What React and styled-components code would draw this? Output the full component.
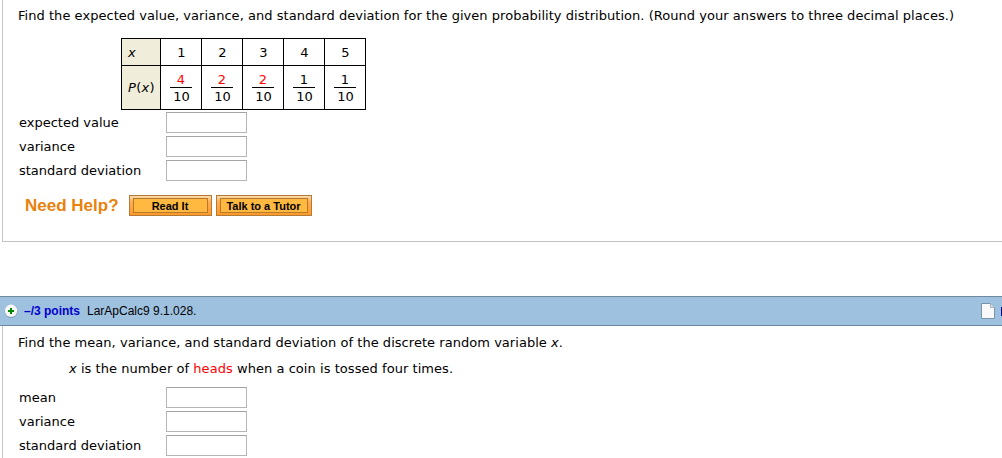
import styled, { createGlobalStyle } from "styled-components";

const GlobalStyle = createGlobalStyle`
  * {
    box-sizing: border-box;
  }
  body {
    margin: 0;
    background-color: white;
    overflow: hidden;
  }
`;
const Page = styled.div`
  width: 100%;
  height: 458px;
  overflow: hidden;
  color: black;
  font-family: Verdana, "DejaVu Sans", sans-serif;
  font-size: 13px;
  line-height: 16px;
  white-space: nowrap;
`;
const Question = styled.div`
  height: ${(props) => props.$height}px;
  margin-left: 2px;
  padding: ${(props) => props.$top}px 0 0 15px;
  border-left: 1px solid #c3c3c3;
  border-bottom: 1px solid #c3c3c3;
`;
const Text = styled.div`
  height: 16px;
  letter-spacing: ${(props) => props.$spacing || 0}px;
`;
const Indent = styled(Text)`
  margin: 10px 0 0 51px;
`;
const Red = styled.span`
  color: #ff0000;
`;
const Table = styled.table`
  width: 245px;
  height: 72px;
  margin: 14px 0 0 103px;
  border-collapse: collapse;
  table-layout: fixed;
`;
const Cell = styled.td`
  width: 41px;
  height: ${(props) => props.$height}px;
  padding: 1px 0 0 1px;
  border: 1px solid black;
  text-align: center;
`;
const HeadCell = styled(Cell)`
  width: 39px;
  padding-left: 6px;
  background-color: #f0eedb;
  letter-spacing: 0.3px;
  text-align: left;
`;
const Fraction = styled.div`
  display: flex;
  flex-direction: column;
  width: 22px;
  margin: 2px 0 0 8px;
`;
const Top = styled.span`
  height: 16px;
  color: ${(props) => (props.$red ? "#ff0000" : "black")};
  border-bottom: 1px solid black;
`;
const Bottom = styled.span`
  height: 18px;
  padding-left: 1px;
  line-height: 17px;
`;
const Answers = styled.div`
  display: grid;
  grid-template-columns: 147px 81px;
  grid-auto-rows: 21px;
  row-gap: 3px;
  margin: ${(props) => props.$top}px 0 0 1px;
`;
const Label = styled.label`
  line-height: 21px;
`;
const Input = styled.input`
  width: 81px;
  height: 21px;
  padding: 1px 4px;
  border: 1px solid #b5b5b5;
  border-top-color: #a3a3a3;
  border-radius: 0;
  outline: none;
  background-color: white;
`;
const Help = styled.div`
  display: flex;
  align-items: center;
  height: 21px;
  margin: 14px 0 0 7px;
  font-family: "Liberation Sans", Arial, sans-serif;
`;
const HelpTitle = styled.span`
  width: 104px;
  color: #e8820c;
  font-size: 17px;
  font-weight: bold;
`;
const HelpButton = styled.button`
  width: ${(props) => props.$width}px;
  height: 21px;
  margin-right: 4px;
  padding: 2px 3px;
  border: 1px solid #b37a38;
  border-radius: 0;
  background: linear-gradient(#ffdcb0, #ffad55 30%, #ff9a2b);
`;
const ButtonText = styled.span`
  display: block;
  height: 15px;
  padding-right: 1px;
  border: 1px solid #b9792a;
  background-color: #ffb940;
  color: black;
  font: bold 11px/14px "Liberation Sans", Arial, sans-serif;
  text-align: center;
`;
const Bar = styled.div`
  display: flex;
  align-items: center;
  height: 30px;
  margin-top: 54px;
  padding-left: 4px;
  border-top: 1px solid #6f8a9e;
  border-bottom: 1px solid #6f8a9e;
  background-color: #9ec1df;
  font-family: "Liberation Sans", Arial, sans-serif;
  font-size: 12px;
`;
const Points = styled.b`
  width: 63px;
  margin-left: 6px;
  color: #0000cc;
`;
const Notes = styled.div`
  display: flex;
  align-items: center;
  margin-left: auto;
`;
const NotesEdge = styled.div`
  width: 1px;
  height: 9px;
  margin-left: 6px;
  background-color: #0000a0;
`;

const columns = [
  { x: 1, top: 4, red: true },
  { x: 2, top: 2, red: true },
  { x: 3, top: 2, red: true },
  { x: 4, top: 1 },
  { x: 5, top: 1 },
];

const PlusIcon = () => (
  <svg width="14" height="14" viewBox="0 0 14 14">
    <circle cx="7" cy="7.4" r="6.5" fill="#7d9bb3" />
    <circle cx="7" cy="6.8" r="6.2" fill="#f8f8f8" />
    <path d="M7 4v6M4 7h6" stroke="#008800" strokeWidth="2" />
  </svg>
);

const PageIcon = () => (
  <svg width="14" height="16" viewBox="0 0 14 16">
    <path d="M.5.5h9l4 4v11H.5z" fill="#f9f9f9" stroke="#7895aa" />
    <path d="M9.5.5v4h4" fill="#e0e0e0" stroke="#a5b4bf" />
  </svg>
);

function AnswerRows({ rows, top }) {
  return (
    <Answers $top={top}>
      {rows.map((name) => (
        <Row key={name} name={name} />
      ))}
    </Answers>
  );
}

function Row({ name }) {
  return (
    <>
      <Label>{name}</Label>
      <Input aria-label={name} />
    </>
  );
}

export default function App() {
  return (
    <>
      <GlobalStyle />
      <Page>
        <Question $height={242} $top={8}>
          <Text $spacing={0.04}>
            Find the expected value, variance, and standard deviation for the
            given probability distribution. (Round your answers to three decimal
            places.)
          </Text>
          <Table>
            <tbody>
              <tr>
                <HeadCell $height={27}>
                  <i>x</i>
                </HeadCell>
                {columns.map((c) => (
                  <Cell key={c.x}>{c.x}</Cell>
                ))}
              </tr>
              <tr>
                <HeadCell $height={44}>
                  <i>P</i>(<i>x</i>)
                </HeadCell>
                {columns.map((c) => (
                  <Cell key={c.x}>
                    <Fraction>
                      <Top $red={c.red}>{c.top}</Top>
                      <Bottom>10</Bottom>
                    </Fraction>
                  </Cell>
                ))}
              </tr>
            </tbody>
          </Table>
          <AnswerRows
            top={2}
            rows={["expected value", "variance", "standard deviation"]}
          />
          <Help>
            <HelpTitle>Need Help?</HelpTitle>
            <HelpButton $width={83}>
              <ButtonText>Read It</ButtonText>
            </HelpButton>
            <HelpButton $width={96}>
              <ButtonText>Talk to a Tutor</ButtonText>
            </HelpButton>
          </Help>
        </Question>
        <Bar>
          <PlusIcon />
          <Points>–/3 points</Points>
          <span>LarApCalc9 9.1.028.</span>
          <Notes>
            <PageIcon />
            <NotesEdge />
          </Notes>
        </Bar>
        <Question $height={160} $top={9}>
          <Text $spacing={0.04}>
            Find the mean, variance, and standard deviation of the discrete
            random variable <i>x</i>.
          </Text>
          <Indent $spacing={0.05}>
            <i>x</i> is the number of <Red>heads</Red> when a coin is tossed
            four times.
          </Indent>
          <AnswerRows
            top={10}
            rows={["mean", "variance", "standard deviation"]}
          />
        </Question>
      </Page>
    </>
  );
}
